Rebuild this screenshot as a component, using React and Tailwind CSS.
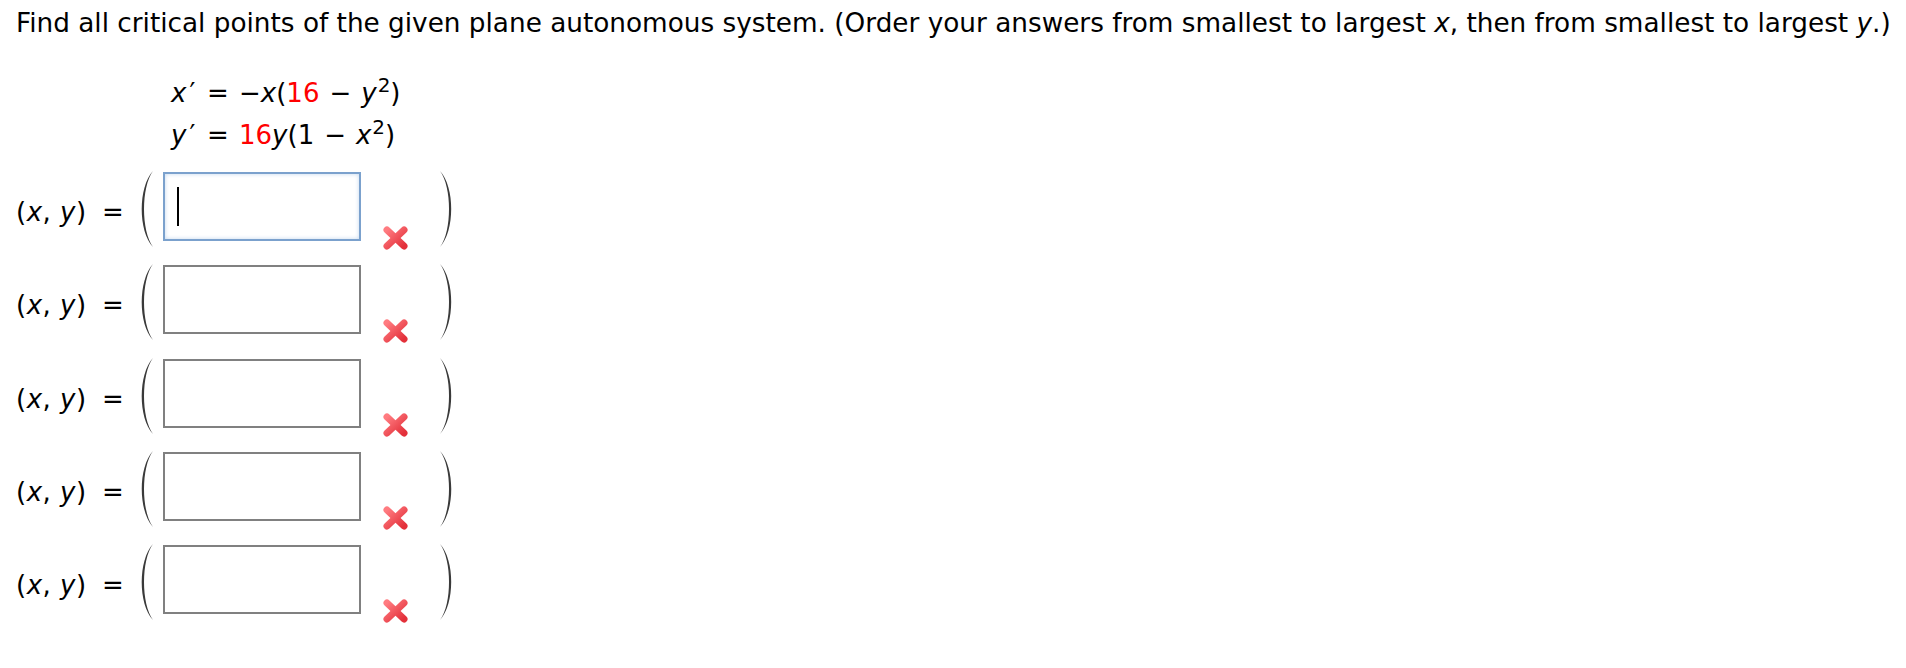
import React from "react";

function LeftParen() {
  return (
    <svg width="18" height="78" viewBox="0 0 18 78" className="shrink-0">
      <path d="M16 1 C 1 17, 1 61, 16 77 C 4 61, 4 17, 16 1 Z" fill="#3a3a3a" />
    </svg>
  );
}

function RightParen() {
  return (
    <svg width="18" height="78" viewBox="0 0 18 78" className="shrink-0">
      <path d="M2 1 C 17 17, 17 61, 2 77 C 14 61, 14 17, 2 1 Z" fill="#3a3a3a" />
    </svg>
  );
}

function RedX({ id }) {
  return (
    <svg width="27" height="26" viewBox="0 0 27 26" className="shrink-0">
      <defs>
        <linearGradient id={"g" + id} x1="0" y1="0" x2="1" y2="1">
          <stop offset="0" stopColor="#ff7b80" />
          <stop offset="1" stopColor="#e3303a" />
        </linearGradient>
      </defs>
      <g stroke={"url(#g" + id + ")"} strokeWidth="7" strokeLinecap="round">
        <line x1="5" y1="5" x2="22" y2="21" />
        <line x1="22" y1="5" x2="5" y2="21" />
      </g>
    </svg>
  );
}

function Row({ focused, id }) {
  return (
    <div className="flex h-[80px] items-start">
      <div className="w-[86px] pt-[28px] leading-[28px] whitespace-pre tracking-[0.5px]">
        (<i>x</i>, <i>y</i>)
      </div>
      <div className="w-[35px] pt-[28px] leading-[28px]">=</div>
      <LeftParen />
      <div className="relative ml-[8px] mt-[2px]">
        <input
          type="text"
          readOnly
          className={
            "block h-[69px] w-[198px] bg-white caret-transparent outline-none border-2 " +
            (focused
              ? "border-[#7ba1cd] shadow-[inset_0_0_4px_#c3d7ee]"
              : "border-[#808080]")
          }
        />
        {focused && (
          <div className="absolute left-[14px] top-[15px] h-[39px] w-[2px] bg-black" />
        )}
      </div>
      <div className="ml-[21px] mt-[55px]">
        <RedX id={id} />
      </div>
      <div className="ml-[29px]">
        <RightParen />
      </div>
    </div>
  );
}

export default function App() {
  return (
    <div
      className="min-h-[668px] bg-white pl-[16px] pt-[7px] text-[26px] text-black"
      style={{ fontFamily: '"DejaVu Sans", Verdana, sans-serif' }}
    >
      <p className="leading-[32px] whitespace-nowrap text-[26.3px]">
        Find all critical points of the given plane autonomous system. (Order your answers from smallest to largest <i>x</i>, then from smallest to largest <i>y</i>.)
      </p>
      <div className="ml-[155px] mt-[33px]">
        <div className="flex leading-[42px]">
          <div className="w-[36px] whitespace-pre"><i>x</i><span className="ml-[3px]">′</span></div>
          <div className="w-[32px]">=</div>
          <div className="whitespace-pre">
            −<i>x</i>(<span className="text-[#ff0000]">16</span>
            <span className="mx-[10px]">−</span>
            <i>y</i>
            <sup className="ml-[1px] text-[20px]">2</sup>)
          </div>
        </div>
        <div className="flex leading-[42px]">
          <div className="w-[36px] whitespace-pre"><i>y</i><span className="ml-[3px]">′</span></div>
          <div className="w-[32px]">=</div>
          <div className="whitespace-pre">
            <span className="text-[#ff0000]">16</span><i>y</i>(1
            <span className="mx-[10px]">−</span>
            <i>x</i>
            <sup className="ml-[1px] text-[20px]">2</sup>)
          </div>
        </div>
      </div>
      <div className="mt-[14px] flex flex-col gap-[13.25px]">
        <Row focused id="1" />
        <Row id="2" />
        <Row id="3" />
        <Row id="4" />
        <Row id="5" />
      </div>
    </div>
  );
}
